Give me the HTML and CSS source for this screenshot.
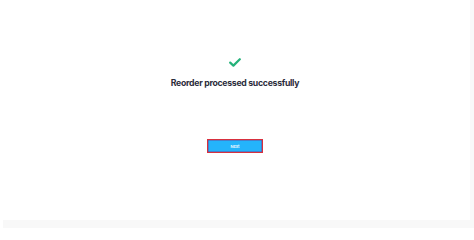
FILE: index.html
```html
<!DOCTYPE html>
<html lang="en">
<head>
<meta charset="utf-8">
<title>Reorder processed</title>
<link rel="stylesheet" href="styles.css">
</head>
<body>
<div class="frame">
  <main class="content">
    <svg class="check" viewBox="0 0 12 9" width="12" height="9" aria-hidden="true">
      <path d="M1.2 4.6 L4.4 7.6 L10.8 1.2" fill="none" stroke="#25b27a" stroke-width="2.2" stroke-linecap="round" stroke-linejoin="round"/>
    </svg>
    <h1 class="title">Reorder processed successfully</h1>
    <button class="next" type="button">Next</button>
  </main>
  <div class="vscroll"></div>
  <div class="hscroll"></div>
  <div class="corner"></div>
</div>
</body>
</html>
```
FILE: styles.css
```css
html, body {
  margin: 0;
  padding: 0;
  background: #ffffff;
  width: 474px;
  height: 237px;
  overflow: hidden;
}
.frame {
  display: grid;
  grid-template-columns: 470px 4px;
  grid-template-rows: 220px 8px 9px;
  height: 237px;
}
.content {
  display: flex;
  flex-direction: column;
  align-items: center;
  padding-top: 58px;
  font-family: Inter, "Noto Sans", sans-serif;
}
.check {
  display: block;
}
.title {
  margin: 9px 0 0;
  font-size: 8.7px;
  font-weight: 700;
  color: #2b2c3b;
  line-height: 14px;
  letter-spacing: -0.28px;
}
.next {
  margin-top: 49px;
  width: 56px;
  height: 14px;
  padding: 0;
  background: #24b4fb;
  border: 1px solid #d8303e;
  box-shadow: inset 0 0 0 0.5px #6a4a9a;
  color: #ffffff;
  font-family: Inter, "Noto Sans", sans-serif;
  font-size: 4px;
  font-weight: 600;
  cursor: pointer;
}
.vscroll {
  grid-column: 2;
  grid-row: 1;
  background: #f9f9f9;
}
.hscroll {
  grid-column: 1;
  grid-row: 2;
  background: #f8f8f8;
  margin-left: 3px;
}
.corner {
  grid-column: 2;
  grid-row: 2;
  background: #f8f8f8;
}
```
